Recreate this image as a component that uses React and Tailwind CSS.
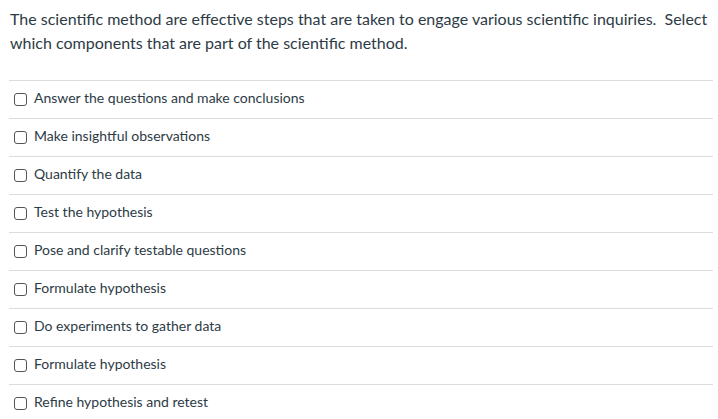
import React from "react";

const options = [
  "Answer the questions and make conclusions",
  "Make insightful observations",
  "Quantify the data",
  "Test the hypothesis",
  "Pose and clarify testable questions",
  "Formulate hypothesis",
  "Do experiments to gather data",
  "Formulate hypothesis",
  "Refine hypothesis and retest",
];

export default function App() {
  return (
    <div className="w-[718px] h-[419px] overflow-hidden bg-white text-[#2d3b45] font-['Lato','Noto_Sans',sans-serif]">
      <div className="pl-[10px] pr-[8px] pt-[7px] text-[16px] leading-[24px]">
        The scientific method are effective steps that are taken to engage various scientific inquiries.&nbsp; Select which components that are part of the scientific method.
      </div>
      <div className="mt-[25px] ml-[9px] mr-[5px]">
        {options.map((o, i) => (
          <div key={i} className="h-[38px] border-t border-[#dcdcdc] flex items-center gap-[7px] pl-[5px]">
            <span className="w-[13px] h-[13px] border border-[#555] rounded-[3px] bg-white shrink-0" />
            <span className="text-[14px] leading-[16px] -mt-[4px]">{o}</span>
          </div>
        ))}
      </div>
    </div>
  );
}
